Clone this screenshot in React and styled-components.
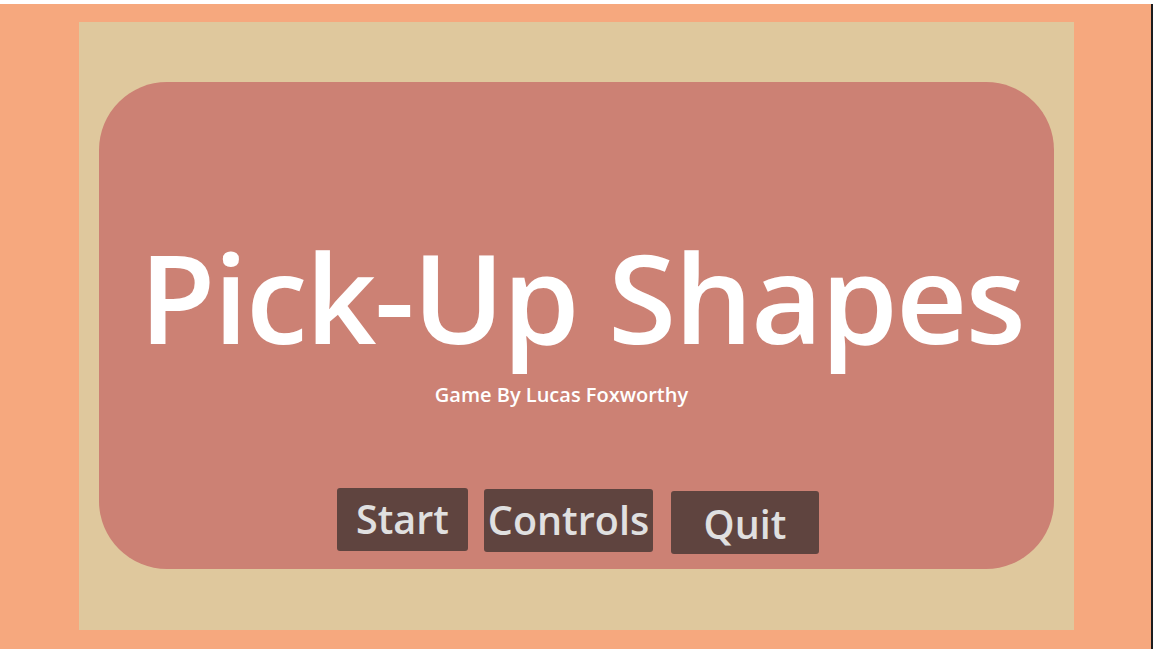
import React from "react";
import styled, { createGlobalStyle } from "styled-components";

const Global = createGlobalStyle`
  html, body {
    margin: 0;
    padding: 0;
    background: #ffffff;
  }
  body {
    font-family: "Open Sans", "Noto Sans", sans-serif;
  }
`;

const Window = styled.div`
  width: 1154px;
  height: 649px;
  padding-top: 4px;
  box-sizing: border-box;
  display: flex;
`;

const Screen = styled.div`
  width: 1151px;
  height: 645px;
  background: #f6a87e;
  padding: 18px 77px 15px 79px;
  box-sizing: border-box;
`;

const Edge = styled.div`
  width: 2px;
  height: 645px;
  background: #1c1c1e;
`;

const Frame = styled.div`
  height: 608px;
  background: #dfc89d;
  padding: 60px 20px 61px 20px;
  box-sizing: border-box;
`;

const Card = styled.div`
  height: 100%;
  background: #cc8174;
  border-radius: 68px;
  display: flex;
  flex-direction: column;
  align-items: center;
`;

const Title = styled.h1`
  margin: 152px 0 0 10px;
  font-size: 124px;
  font-weight: 550;
  line-height: 124px;
  color: #ffffff;
  letter-spacing: -2px;
  white-space: nowrap;
`;

const Credit = styled.div`
  margin: 24px 0 0 -30px;
  font-size: 20px;
  font-weight: 600;
  line-height: 26px;
  color: #ffffff;
`;

const Menu = styled.div`
  margin: 80px 0 0 3px;
  display: flex;
  align-items: flex-start;
`;

const MenuButton = styled.button`
  width: ${(p) => p.$w}px;
  height: 63px;
  margin-top: ${(p) => p.$drop || 0}px;
  margin-left: ${(p) => p.$gap || 0}px;
  padding: ${(p) => p.$shift || 0}px 0 0 0;
  border: none;
  border-radius: 3px;
  background: #5f443f;
  color: #e0e0e0;
  font-family: "Open Sans", "Noto Sans", sans-serif;
  font-size: 39.5px;
  font-weight: 550;
  line-height: 61px;
  text-align: center;
  white-space: nowrap;
  box-sizing: border-box;
`;

export default function App() {
  return (
    <>
      <Global />
      <Window>
        <Screen>
          <Frame>
            <Card>
              <Title>Pick-Up Shapes</Title>
              <Credit>Game By Lucas Foxworthy</Credit>
              <Menu>
                <MenuButton $w={131}>Start</MenuButton>
                <MenuButton $w={169} $gap={16} $drop={1}>
                  Controls
                </MenuButton>
                <MenuButton $w={148} $gap={18} $drop={3} $shift={3}>
                  Quit
                </MenuButton>
              </Menu>
            </Card>
          </Frame>
        </Screen>
        <Edge />
      </Window>
    </>
  );
}
